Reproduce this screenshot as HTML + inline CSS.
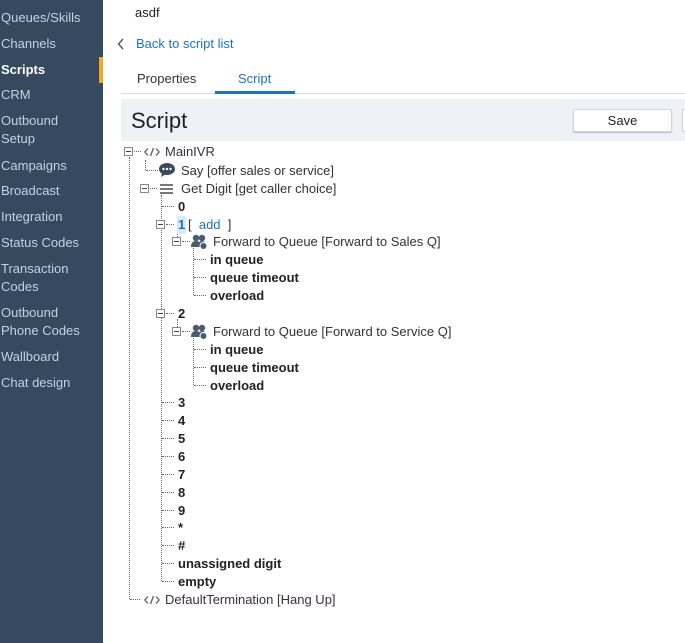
<!DOCTYPE html>
<html><head><meta charset="utf-8"><style>
*{margin:0;padding:0;box-sizing:border-box}
body{width:685px;height:643px;overflow:hidden;background:#fff;font-family:"Liberation Sans",sans-serif;font-size:13px;color:#333;position:relative}
.sb{position:absolute;left:0;top:0;width:103px;height:643px;background:#354a5f}
.sb div{position:absolute;left:1px;color:#c5d2e0;font-size:13px;line-height:18px}
.sb .act{color:#fff;font-weight:bold}
.bar{position:absolute;left:99px;top:57px;width:4px;height:26px;background:#f5a623}
.a{position:absolute;white-space:nowrap;line-height:18px;margin-top:1px}
.b{font-weight:bold;color:#222}
.v{position:absolute;border-left:1px dotted #666;width:0}
.h{position:absolute;border-top:1px dotted #666;height:0}
.t{position:absolute;width:9px;height:9px;border:1px solid #888;background:#fff}
.t:after{content:"";position:absolute;left:1px;top:3px;width:5px;height:1px;background:#444}
.ic{position:absolute;color:#666;font-size:12px;line-height:18px;letter-spacing:-1px}
</style></head><body>
<div class="sb">
<div style="top:9px">Queues/Skills</div>
<div style="top:35px">Channels</div>
<div class="act" style="top:61px">Scripts</div>
<div style="top:86px">CRM</div>
<div style="top:112px">Outbound<br>Setup</div>
<div style="top:157px">Campaigns</div>
<div style="top:182px">Broadcast</div>
<div style="top:208px">Integration</div>
<div style="top:234px">Status Codes</div>
<div style="top:260px">Transaction<br>Codes</div>
<div style="top:304px">Outbound<br>Phone Codes</div>
<div style="top:348px">Wallboard</div>
<div style="top:374px">Chat design</div>
</div>
<div class="bar"></div>
<div class="a" style="left:135px;top:3px;color:#222">asdf</div>
<svg style="position:absolute;left:117px;top:38px" width="8" height="12"><path d="M6 1 L1.5 6 L6 11" fill="none" stroke="#555" stroke-width="1.4"/></svg>
<div class="a" style="left:136px;top:34px;color:#1a73c8">Back to script list</div>
<div class="a" style="left:137px;top:69px;color:#333">Properties</div>
<div class="a" style="left:238px;top:69px;color:#1a73c8">Script</div>
<div style="position:absolute;left:121px;top:93px;width:564px;height:1px;background:#d5dae0"></div>
<div style="position:absolute;left:215px;top:91px;width:80px;height:3px;background:#1a73c8"></div>
<div style="position:absolute;left:121px;top:99px;width:564px;height:42px;background:#eef1f5"></div>
<div class="a" style="left:131px;top:107px;font-size:22px;line-height:26px;color:#222">Script</div>
<div style="position:absolute;left:573px;top:109px;width:99px;height:23px;background:#fff;border:1px solid #cfd5dc;border-radius:2px;box-shadow:0 1px 1px #bbb;text-align:center;line-height:21px;color:#222">Save</div>
<div style="position:absolute;left:682px;top:109px;width:10px;height:23px;background:#fff;border:1px solid #cfd5dc"></div>

<div class="v" style="left:129px;top:157px;height:442px"></div>
<div class="v" style="left:145px;top:160px;height:10px"></div>
<div class="v" style="left:161px;top:195px;height:386px"></div>
<div class="v" style="left:177px;top:230px;height:11px"></div>
<div class="v" style="left:177px;top:319px;height:12px"></div>
<div class="v" style="left:193px;top:248px;height:47px"></div>
<div class="v" style="left:193px;top:338px;height:47px"></div>
<div class="h" style="left:134px;top:151px;width:7px"></div>
<div class="h" style="left:146px;top:170px;width:12px"></div>
<div class="h" style="left:150px;top:188px;width:7px"></div>
<div class="h" style="left:162px;top:206px;width:12px"></div>
<div class="h" style="left:166px;top:224px;width:8px"></div>
<div class="h" style="left:182px;top:241px;width:8px"></div>
<div class="h" style="left:194px;top:259px;width:12px"></div>
<div class="h" style="left:194px;top:277px;width:12px"></div>
<div class="h" style="left:194px;top:295px;width:12px"></div>
<div class="h" style="left:166px;top:313px;width:8px"></div>
<div class="h" style="left:182px;top:331px;width:8px"></div>
<div class="h" style="left:194px;top:349px;width:12px"></div>
<div class="h" style="left:194px;top:367px;width:12px"></div>
<div class="h" style="left:194px;top:385px;width:12px"></div>
<div class="h" style="left:162px;top:402px;width:12px"></div>
<div class="h" style="left:162px;top:420px;width:12px"></div>
<div class="h" style="left:162px;top:438px;width:12px"></div>
<div class="h" style="left:162px;top:456px;width:12px"></div>
<div class="h" style="left:162px;top:474px;width:12px"></div>
<div class="h" style="left:162px;top:492px;width:12px"></div>
<div class="h" style="left:162px;top:510px;width:12px"></div>
<div class="h" style="left:162px;top:527px;width:12px"></div>
<div class="h" style="left:162px;top:545px;width:12px"></div>
<div class="h" style="left:162px;top:563px;width:12px"></div>
<div class="h" style="left:162px;top:581px;width:12px"></div>
<div class="h" style="left:130px;top:599px;width:10px"></div>
<div class="t" style="left:124px;top:147px"></div>
<div class="t" style="left:140px;top:184px"></div>
<div class="t" style="left:156px;top:220px"></div>
<div class="t" style="left:172px;top:237px"></div>
<div class="t" style="left:156px;top:309px"></div>
<div class="t" style="left:172px;top:327px"></div>
<svg style="position:absolute;left:144px;top:147px" width="16" height="10"><path d="M4 1.5 L0.8 5 L4 8.5 M12 1.5 L15.2 5 L12 8.5 M9.5 1 L6.5 9" fill="none" stroke="#555" stroke-width="1.2"/></svg>
<svg style="position:absolute;left:144px;top:595px" width="16" height="10"><path d="M4 1.5 L0.8 5 L4 8.5 M12 1.5 L15.2 5 L12 8.5 M9.5 1 L6.5 9" fill="none" stroke="#555" stroke-width="1.2"/></svg>
<svg style="position:absolute;left:159px;top:163px" width="16" height="14"><ellipse cx="8" cy="6" rx="8" ry="6" fill="#3a4a5c"/><path d="M3 10 L2 14 L7 11Z" fill="#3a4a5c"/><circle cx="4.5" cy="6" r="1.2" fill="#fff"/><circle cx="8" cy="6" r="1.2" fill="#fff"/><circle cx="11.5" cy="6" r="1.2" fill="#fff"/></svg>
<svg style="position:absolute;left:160px;top:183px" width="13" height="12"><rect y="1" width="13" height="2" fill="#777"/><rect y="5" width="13" height="2" fill="#777"/><rect y="9" width="13" height="2" fill="#777"/></svg>
<svg style="position:absolute;left:191px;top:234px" width="17" height="16"><circle cx="5" cy="4" r="3.2" fill="#4a5b6e"/><path d="M0 13 Q0 7 5 7 Q10 7 10 13Z" fill="#4a5b6e"/><circle cx="11" cy="4" r="3.2" fill="#4a5b6e"/><path d="M7 13 Q7 7 11 7 Q15 7 15 11Z" fill="#4a5b6e"/><circle cx="12.5" cy="12" r="3.5" fill="#4a5b6e" stroke="#fff"/></svg>
<svg style="position:absolute;left:191px;top:324px" width="17" height="16"><circle cx="5" cy="4" r="3.2" fill="#4a5b6e"/><path d="M0 13 Q0 7 5 7 Q10 7 10 13Z" fill="#4a5b6e"/><circle cx="11" cy="4" r="3.2" fill="#4a5b6e"/><path d="M7 13 Q7 7 11 7 Q15 7 15 11Z" fill="#4a5b6e"/><circle cx="12.5" cy="12" r="3.5" fill="#4a5b6e" stroke="#fff"/></svg>
<div class="a" style="left:165px;top:142px;color:#3a2f45">MainIVR</div>
<div class="a" style="left:181px;top:161px">Say [offer sales or service]</div>
<div class="a" style="left:181px;top:179px">Get Digit [get caller choice]</div>
<div class="a b" style="left:178px;top:197px">0</div>
<div class="a b" style="left:177px;top:215px;background:#d8e9f8;color:#1a73c8;padding:0 1px">1</div>
<div class="a" style="left:188px;top:215px">[ &nbsp;<span style="color:#1a73c8">add</span>&nbsp; ]</div>
<div class="a" style="left:213px;top:232px">Forward to Queue [Forward to Sales Q]</div>
<div class="a b" style="left:210px;top:250px">in queue</div>
<div class="a b" style="left:210px;top:268px">queue timeout</div>
<div class="a b" style="left:210px;top:286px">overload</div>
<div class="a b" style="left:178px;top:304px">2</div>
<div class="a" style="left:213px;top:322px">Forward to Queue [Forward to Service Q]</div>
<div class="a b" style="left:210px;top:340px">in queue</div>
<div class="a b" style="left:210px;top:358px">queue timeout</div>
<div class="a b" style="left:210px;top:376px">overload</div>
<div class="a b" style="left:178px;top:393px">3</div>
<div class="a b" style="left:178px;top:411px">4</div>
<div class="a b" style="left:178px;top:429px">5</div>
<div class="a b" style="left:178px;top:447px">6</div>
<div class="a b" style="left:178px;top:465px">7</div>
<div class="a b" style="left:178px;top:483px">8</div>
<div class="a b" style="left:178px;top:501px">9</div>
<div class="a b" style="left:178px;top:518px">*</div>
<div class="a b" style="left:178px;top:536px">#</div>
<div class="a b" style="left:178px;top:554px">unassigned digit</div>
<div class="a b" style="left:178px;top:572px">empty</div>
<div class="a" style="left:165px;top:590px;color:#3a2f45">DefaultTermination [Hang Up]</div>
</body></html>
